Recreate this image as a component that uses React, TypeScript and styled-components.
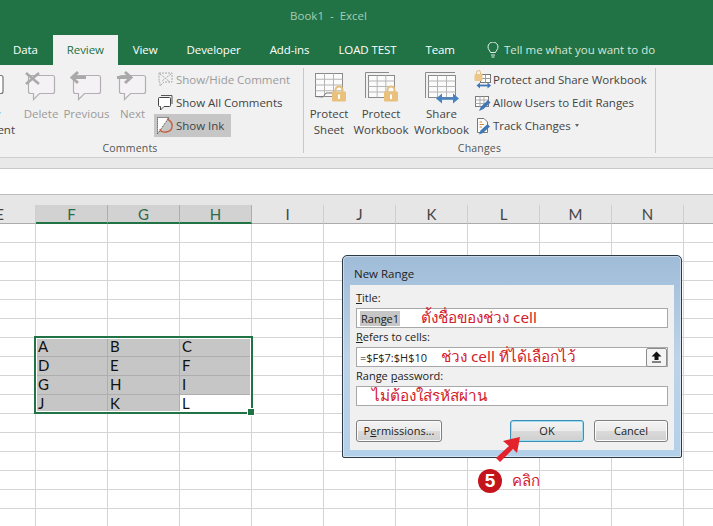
import React from 'react';
import styled, { createGlobalStyle } from 'styled-components';

const Global = createGlobalStyle`
  html, body { margin: 0; padding: 0; background: #fff; overflow: hidden; }
  * { box-sizing: border-box; }
`;

const UI = `"Open Sans", "Noto Sans", sans-serif`;

const Page = styled.div`
  position: relative;
  width: 713px;
  height: 526px;
  overflow: hidden;
  display: flex;
  flex-direction: column;
  font-family: ${UI};
  background: #fff;
`;
const TitleBar = styled.div`
  height: 35px;
  flex: none;
  background: #217346;
  color: #a6cdb6;
  font-size: 11.5px;
  display: flex;
  align-items: center;
  justify-content: center;
  padding-right: 56px;
  padding-bottom: 4px;
  white-space: pre;
`;
const TabRow = styled.div`
  height: 30px;
  flex: none;
  background: #217346;
  display: flex;
  gap: 1px;
`;
const Tab = styled.div<{ $active?: boolean }>`
  height: 30px;
  padding: 2px 14px 0;
  font-size: 11.5px;
  letter-spacing: -0.1px;
  line-height: 26px;
  white-space: nowrap;
  color: ${p => (p.$active ? '#217346' : '#fff')};
  background: ${p => (p.$active ? '#f1f1f1' : 'transparent')};
  &:first-child { margin-left: -1px; }
`;
const TellMe = styled.div`
  display: flex;
  align-items: center;
  gap: 5px;
  margin-left: 17px;
  padding-bottom: 1px;
  font-size: 11.5px;
  color: #d4e6da;
  white-space: nowrap;
`;
const Ribbon = styled.div`
  height: 93px;
  flex: none;
  background: #f1f1f1;
  border-bottom: 1px solid #cfcfcf;
  display: flex;
  padding-top: 3px;
  align-items: flex-start;
`;
const Group = styled.div<{ $width: number; $offset?: number }>`
  width: ${p => p.$width}px;
  margin-left: ${p => p.$offset ?? 0}px;
  height: 85px;
  flex: none;
  border-right: 1px solid #c8c8c8;
  display: flex;
  flex-direction: column;
`;
const GroupBody = styled.div<{ $pad?: number }>`
  height: 72px;
  display: flex;
  padding-left: ${p => p.$pad ?? 0}px;
`;
const GroupLabel = styled.div`
  height: 13px;
  line-height: 16px;
  text-align: center;
  font-size: 10.5px;
  color: #555;
  letter-spacing: 0.2px;
`;
const LargeBtn = styled.div<{ $width: number; $off?: boolean }>`
  width: ${p => p.$width}px;
  flex: none;
  display: flex;
  flex-direction: column;
  align-items: center;
  font-size: 11.5px;
  line-height: 16px;
  text-align: center;
  white-space: nowrap;
  color: ${p => (p.$off ? '#9b9b9b' : '#444')};
`;
const IconSvg = styled.svg`
  display: block;
  flex: none;
`;
const Stack = styled.div`
  display: flex;
  flex-direction: column;
  align-items: flex-start;
`;
const SmallBtn = styled.div<{ $off?: boolean; $on?: boolean }>`
  height: 23px;
  display: flex;
  align-items: center;
  padding-right: 7px;
  font-size: 11.5px;
  letter-spacing: -0.02px;
  white-space: nowrap;
  color: ${p => (p.$off ? '#9b9b9b' : '#444')};
  background: ${p => (p.$on ? '#c6c6c6' : 'transparent')};
`;
const Caret = styled.span`
  width: 0;
  height: 0;
  margin-left: 4px;
  border-left: 2.5px solid transparent;
  border-right: 2.5px solid transparent;
  border-top: 3px solid #666;
`;
const Band = styled.div`
  height: 11px;
  flex: none;
  background: #e9e9e9;
  border-bottom: 1px solid #c8c8c8;
`;
const FormulaBar = styled.div`
  height: 26px;
  flex: none;
  background: #fff;
  border-bottom: 1px solid #bdbdbd;
`;
const Sheet = styled.div`
  position: relative;
  flex: 1;
  margin-left: -36px;
  overflow: hidden;
`;
const Headers = styled.div`
  display: grid;
  grid-template-columns: repeat(11, 72px);
  height: 29px;
  padding-top: 10px;
  background: #e6e6e6;
`;
const ColHead = styled.div<{ $on?: boolean }>`
  height: 19px;
  background: ${p => (p.$on ? '#d2d2d2' : '#e6e6e6')};
  border-right: 1px solid ${p => (p.$on ? '#aeaeae' : '#cfcfcf')};
  border-bottom: ${p => (p.$on ? '2px solid #217346' : '1px solid #ababab')};
  color: ${p => (p.$on ? '#2c6a48' : '#444')};
  font-family: Lato, sans-serif;
  font-size: 15px;
  line-height: 18px;
  text-align: center;
`;
const Cells = styled.div`
  display: grid;
  grid-template-columns: repeat(11, 72px);
  grid-auto-rows: 19px;
`;
const Cell = styled.div<{ $on?: boolean }>`
  background: ${p => (p.$on ? '#c6c6c6' : '#fff')};
  border-right: 1px solid ${p => (p.$on ? '#aeaeae' : '#d4d4d4')};
  border-bottom: 1px solid ${p => (p.$on ? '#aeaeae' : '#d4d4d4')};
  padding-left: 2px;
  font-family: Lato, sans-serif;
  font-size: 15px;
  line-height: 17px;
  color: #111;
`;
const Selection = styled.div`
  position: absolute;
  left: 70px;
  top: 141px;
  width: 219px;
  height: 78px;
  border: 2px solid #217346;
  box-shadow: inset 0 0 0 1px #fff;
  pointer-events: none;
`;
const Handle = styled.div`
  position: absolute;
  right: -3px;
  bottom: -3px;
  width: 6px;
  height: 6px;
  background: #217346;
  outline: 1px solid #fff;
`;
const Dialog = styled.div`
  position: absolute;
  left: 342px;
  top: 255px;
  width: 340px;
  height: 203px;
  padding: 0 7px 7px;
  border: 1px solid #2b3a44;
  border-radius: 5px 5px 2px 2px;
  background: linear-gradient(#9fbcd8 0, #bdd3e8 50%, #b3d0ea 100%);
  box-shadow: 0 0 0 1px rgba(255, 255, 255, 0.45) inset;
  display: flex;
  flex-direction: column;
`;
const DialogTitle = styled.div`
  height: 29px;
  flex: none;
  font-size: 11.5px;
  line-height: 35px;
  color: #222;
  padding-left: 4px;
`;
const Panel = styled.div`
  flex: 1;
  background: #f0f0f0;
  padding: 4px 6px 8px;
  display: flex;
  flex-direction: column;
`;
const FieldLabel = styled.div`
  height: 19px;
  font-size: 11px;
  line-height: 17px;
  color: #222;
`;
const Field = styled.div`
  height: 20px;
  background: #fff;
  border: 1px solid #a8a8a8;
  padding: 0 3px;
  display: flex;
  align-items: center;
  font-size: 11px;
  color: #222;
  white-space: nowrap;
  overflow: visible;
`;
const Selected = styled.span`
  background: #c6c6c6;
  padding: 0 1px;
  line-height: 15px;
`;
const Note = styled.span<{ $gap: number }>`
  margin-left: ${p => p.$gap}px;
  margin-top: -2px;
  font-family: "Noto Sans", "DejaVu Sans", sans-serif;
  font-size: 15.3px;
  line-height: 18px;
  color: #d3202a;
`;
const PickBtn = styled.div`
  margin-left: auto;
  margin-right: -3px;
  width: 21px;
  height: 19px;
  border: 1px solid #8d8d8d;
  border-radius: 2px;
  background: #f4f4f4;
  display: flex;
  align-items: center;
  justify-content: center;
`;
const Buttons = styled.div`
  margin-top: 14px;
  display: flex;
  justify-content: space-between;
`;
const RightButtons = styled.div`
  display: flex;
  gap: 10px;
`;
const Btn = styled.div<{ $w: number; $focus?: boolean }>`
  width: ${p => p.$w}px;
  height: 22px;
  border-radius: 3px;
  border: 1px solid ${p => (p.$focus ? '#3c8fb5' : '#7f7f7f')};
  box-shadow: ${p => (p.$focus ? 'inset 0 0 0 1px #9fdcef' : 'inset 0 0 0 1px #fbfbfb')};
  background: linear-gradient(#f3f3f3 0, #ebebeb 48%, #dadada 52%, #cfcfcf 100%);
  font-size: 11px;
  line-height: 20px;
  text-align: center;
  color: #222;
`;
const ArrowSvg = styled.svg`
  position: absolute;
  left: 490px;
  top: 430px;
`;
const Callout = styled.div`
  position: absolute;
  left: 478px;
  top: 469px;
  display: flex;
  align-items: center;
  gap: 10px;
`;
const Badge = styled.div`
  width: 24px;
  height: 24px;
  border-radius: 50%;
  background: #c4151c;
  color: #fff;
  font-family: "Liberation Sans", sans-serif;
  font-weight: bold;
  font-size: 19px;
  line-height: 24px;
  text-align: center;
`;
const CalloutText = styled.span`
  font-family: "Noto Sans", "DejaVu Sans", sans-serif;
  font-size: 15px;
  color: #d3202a;
`;

const Bubble = ({ x, y, w, h, stroke = '#b3aeb3', fill = '#f5f2f6' }: { x: number; y: number; w: number; h: number; stroke?: string; fill?: string }) => (
  <path
    d={`M${x + 2} ${y}H${x + w - 2}Q${x + w} ${y} ${x + w} ${y + 2}V${y + h - 2}Q${x + w} ${y + h} ${x + w - 2} ${y + h}H${x + 11}L${x + 5} ${y + h + 6}V${y + h}H${x + 2}Q${x} ${y + h} ${x} ${y + h - 2}V${y + 2}Q${x} ${y} ${x + 2} ${y}Z`}
    fill={fill}
    stroke={stroke}
    strokeWidth="1.2"
  />
);

const NewIcon = () => (
  <IconSvg width="63" height="38" viewBox="0 0 63 38">
    <Bubble x={17} y={7.5} w={29} h={18} stroke="#777" fill="#fff" />
  </IconSvg>
);
const DeleteIcon = () => (
  <IconSvg width="42" height="38" viewBox="0 0 42 38">
    <Bubble x={8.5} y={7.5} w={26} h={18} />
    <path d="M6 5L19 16M19 5L6 16" stroke="#a9a9a9" strokeWidth="2.6" />
  </IconSvg>
);
const PrevIcon = () => (
  <IconSvg width="49" height="38" viewBox="0 0 49 38">
    <Bubble x={11.5} y={7.5} w={27} h={18} />
    <path d="M10 9.5H24M16 4L10 9.5L16 15" fill="none" stroke="#a9a9a9" strokeWidth="3" />
  </IconSvg>
);
const NextIcon = () => (
  <IconSvg width="43" height="38" viewBox="0 0 43 38">
    <Bubble x={8.5} y={7.5} w={26} h={18} />
    <path d="M6 9.5H19M14 4L20 9.5L14 15" fill="none" stroke="#a9a9a9" strokeWidth="3" />
  </IconSvg>
);
const ShowHideIcon = () => (
  <IconSvg width="22" height="23" viewBox="0 0 22 23">
    <path d="M5 5H18V14H10L6 18V14H5ZM6 6L16 14M17 6L8 13" fill="none" stroke="#aaa" strokeWidth="1" strokeDasharray="2 1" />
  </IconSvg>
);
const ShowAllIcon = () => (
  <IconSvg width="22" height="23" viewBox="0 0 22 23">
    <path d="M7 4.5H18V13" fill="none" stroke="#555" strokeWidth="1" />
    <path d="M5.5 6.5H15.5Q16.5 6.5 16.5 7.5V14.5Q16.5 15.5 15.5 15.5H10L6.5 19V15.5H5.5Q4.5 15.5 4.5 14.5V7.5Q4.5 6.5 5.5 6.5Z" fill="#fff" stroke="#444" strokeWidth="1" />
  </IconSvg>
);
const ShowInkIcon = () => (
  <IconSvg width="22" height="23" viewBox="0 0 22 23">
    <path d="M3.5 3.5H15L3.5 20Z" fill="#fff" stroke="#333" strokeWidth="1" strokeDasharray="1 1" />
    <path d="M13 5C20 8 20 17 12 18C8 18.5 6 17 6 15" fill="none" stroke="#c55f3f" strokeWidth="1.4" />
  </IconSvg>
);
const Lock = ({ x, y }: { x: number; y: number }) => (
  <g>
    <path d={`M${x + 3.5} ${y + 6}V${y + 4}a3.5 3.5 0 0 1 7 0V${y + 6}`} fill="none" stroke="#e6bf7b" strokeWidth="2" />
    <rect x={x} y={y + 5.5} width={14} height={10} rx="1" fill="#e9c07c" />
    <rect x={x + 6} y={y + 8.5} width={2} height={4.5} fill="#fff" />
  </g>
);
const SheetGrid = ({ x, y, w, h }: { x: number; y: number; w: number; h: number }) => {
  const cols = [1, 2].map(i => x + (w * i) / 3);
  const rows = [0.25, 0.5, 0.75].map(i => y + h * i);
  return (
    <g fill="none" stroke="#8a8a8a" strokeWidth="1">
      <rect x={x} y={y} width={w} height={h} fill="#fbfbfb" />
      {cols.map(c => <path key={c} d={`M${c} ${y}V${y + h}`} stroke="#b5b5b5" />)}
      {rows.map(r => <path key={r} d={`M${x} ${r}H${x + w}`} stroke="#b5b5b5" />)}
    </g>
  );
};
const ProtectSheetIcon = () => (
  <IconSvg width="40" height="38" viewBox="0 0 40 38">
    <SheetGrid x={6.5} y={5.5} w={27} h={23} />
    <path d="M6.5 28.5L14 29L17 25H24" fill="none" stroke="#777" />
    <Lock x={23} y={18} />
  </IconSvg>
);
const ProtectWorkbookIcon = () => (
  <IconSvg width="60" height="38" viewBox="0 0 60 38">
    <path d="M14.5 30V4.5H38" fill="none" stroke="#8a8a8a" />
    <SheetGrid x={17.5} y={7.5} w={26} h={22} />
    <Lock x={33} y={18} />
  </IconSvg>
);
const ShareWorkbookIcon = () => (
  <IconSvg width="59" height="38" viewBox="1 0 59 38">
    <path d="M14.5 30V4.5H44" fill="none" stroke="#8a8a8a" />
    <SheetGrid x={17.5} y={7.5} w={27} h={22} />
    <path d="M27 30.5H46" stroke="#4a82bd" strokeWidth="2.6" />
    <path d="M25 30.5L31 25.5V35.5ZM48 30.5L42 25.5V35.5Z" fill="#4a82bd" />
  </IconSvg>
);
const ProtectShareIcon = () => (
  <IconSvg width="22" height="23" viewBox="0 0 22 23">
    <rect x="9.5" y="6.5" width="10" height="8" fill="#fff" stroke="#777" />
    <path d="M14.5 6.5V14.5M9.5 10.5H19.5" stroke="#999" />
    <rect x="3.5" y="6" width="8" height="7" rx="1" fill="#ecc789" />
    <path d="M5.5 6V4.5a2 2 0 0 1 4 0V6" fill="none" stroke="#e3b871" />
    <path d="M7 17.5H19" stroke="#3f78b5" strokeWidth="1.8" />
    <path d="M5.5 17.5L9 14.5V20.5ZM20 17.5L16.5 14.5V20.5Z" fill="#3f78b5" />
  </IconSvg>
);
const AllowIcon = () => (
  <IconSvg width="22" height="23" viewBox="0 0 22 23">
    <rect x="4.5" y="5.5" width="13" height="10" fill="#fff" stroke="#7a7a7a" />
    <path d="M4.5 9H17.5M4.5 12.5H17.5M9 5.5V15.5M13 5.5V15.5" stroke="#aaa" />
    <path d="M8 20L10 15.5L17 9L19.5 11.5L12.5 18Z" fill="#3f78b5" />
  </IconSvg>
);
const TrackIcon = () => (
  <IconSvg width="22" height="23" viewBox="0 0 22 23">
    <path d="M6.5 4.5H13L16.5 8V18.5H6.5Z" fill="#fff" stroke="#777" />
    <path d="M8.5 8H11M8.5 10.5H13M8.5 13H11" stroke="#d0883c" />
    <path d="M8 20.5L9.5 16.5L16.5 10L19 12.5L12 19Z" fill="#3f78b5" />
  </IconSvg>
);
const BulbIcon = () => (
  <IconSvg width="12" height="16" viewBox="0 0 12 16">
    <path d="M3.5 10.5C3 8.5 1 7.5 1 5A5 5 0 0 1 11 5C11 7.5 9 8.5 8.5 10.5ZM4 13H8M4.5 15H7.5" fill="none" stroke="#e6f0ea" strokeWidth="1" />
  </IconSvg>
);

const columns = ['E', 'F', 'G', 'H', 'I', 'J', 'K', 'L', 'M', 'N', 'O'];
const cellData: Record<string, string> = {
  '6-1': 'A', '6-2': 'B', '6-3': 'C',
  '7-1': 'D', '7-2': 'E', '7-3': 'F',
  '8-1': 'G', '8-2': 'H', '8-3': 'I',
  '9-1': 'J', '9-2': 'K', '9-3': 'L',
};
const rowIndexes = Array.from({ length: 16 }, (_, i) => i);

export default function App() {
  return (
    <Page>
      <Global />
      <TitleBar>Book1  -  Excel</TitleBar>
      <TabRow>
        <Tab>Data</Tab>
        <Tab $active>Review</Tab>
        <Tab>View</Tab>
        <Tab>Developer</Tab>
        <Tab>Add-ins</Tab>
        <Tab>LOAD TEST</Tab>
        <Tab>Team</Tab>
        <TellMe><BulbIcon />Tell me what you want to do</TellMe>
      </TabRow>
      <Ribbon>
        <Group $width={347} $offset={-43}>
          <GroupBody>
            <LargeBtn $width={63}><NewIcon />New<br />Comment</LargeBtn>
            <LargeBtn $width={42} $off><DeleteIcon />Delete</LargeBtn>
            <LargeBtn $width={49} $off><PrevIcon />Previous</LargeBtn>
            <LargeBtn $width={43} $off><NextIcon />Next</LargeBtn>
            <Stack>
              <SmallBtn $off><ShowHideIcon />Show/Hide Comment</SmallBtn>
              <SmallBtn><ShowAllIcon />Show All Comments</SmallBtn>
              <SmallBtn $on><ShowInkIcon />Show Ink</SmallBtn>
            </Stack>
          </GroupBody>
          <GroupLabel>Comments</GroupLabel>
        </Group>
        <Group $width={352}>
          <GroupBody $pad={4}>
            <LargeBtn $width={42}><ProtectSheetIcon />Protect<br />Sheet</LargeBtn>
            <LargeBtn $width={62}><ProtectWorkbookIcon />Protect<br />Workbook</LargeBtn>
            <LargeBtn $width={59}><ShareWorkbookIcon />Share<br />Workbook</LargeBtn>
            <Stack>
              <SmallBtn><ProtectShareIcon />Protect and Share Workbook</SmallBtn>
              <SmallBtn><AllowIcon />Allow Users to Edit Ranges</SmallBtn>
              <SmallBtn><TrackIcon />Track Changes<Caret /></SmallBtn>
            </Stack>
          </GroupBody>
          <GroupLabel>Changes</GroupLabel>
        </Group>
      </Ribbon>
      <Band />
      <FormulaBar />
      <Sheet>
        <Headers>
          {columns.map(c => (
            <ColHead key={c} $on={c === 'F' || c === 'G' || c === 'H'}>{c}</ColHead>
          ))}
        </Headers>
        <Cells>
          {rowIndexes.map(r =>
            columns.map((c, i) => {
              const key = `${r}-${i}`;
              const value = cellData[key];
              return <Cell key={key} $on={!!value && value !== 'L'}>{value}</Cell>;
            })
          )}
        </Cells>
        <Selection><Handle /></Selection>
      </Sheet>
      <Dialog>
        <DialogTitle>New Range</DialogTitle>
        <Panel>
          <FieldLabel><u>T</u>itle:</FieldLabel>
          <Field><Selected>Range1</Selected><Note $gap={21}>ตั้งชื่อของช่วง cell</Note></Field>
          <FieldLabel><u>R</u>efers to cells:</FieldLabel>
          <Field>
            =$F$7:$H$10<Note $gap={14}>ช่วง cell ที่ได้เลือกไว้</Note>
            <PickBtn>
              <IconSvg width="11" height="12" viewBox="0 0 11 12">
                <path d="M5.5 0.5L10.5 5.5H7.5V9H3.5V5.5H0.5ZM1 10.5H10V11.5H1Z" fill="#111" />
              </IconSvg>
            </PickBtn>
          </Field>
          <FieldLabel>Range <u>p</u>assword:</FieldLabel>
          <Field><Note $gap={12}>ไม่ต้องใส่รหัสผ่าน</Note></Field>
          <Buttons>
            <Btn $w={86}>P<u>e</u>rmissions...</Btn>
            <RightButtons>
              <Btn $w={74} $focus>OK</Btn>
              <Btn $w={74}>Cancel</Btn>
            </RightButtons>
          </Buttons>
        </Panel>
      </Dialog>
      <ArrowSvg width="36" height="36" viewBox="0 0 36 36">
        <polygon points="30,7 13,11 19,16 6,28 10,32 23,19 27,23" fill="#e3222b" />
      </ArrowSvg>
      <Callout>
        <Badge>5</Badge>
        <CalloutText>คลิก</CalloutText>
      </Callout>
    </Page>
  );
}
